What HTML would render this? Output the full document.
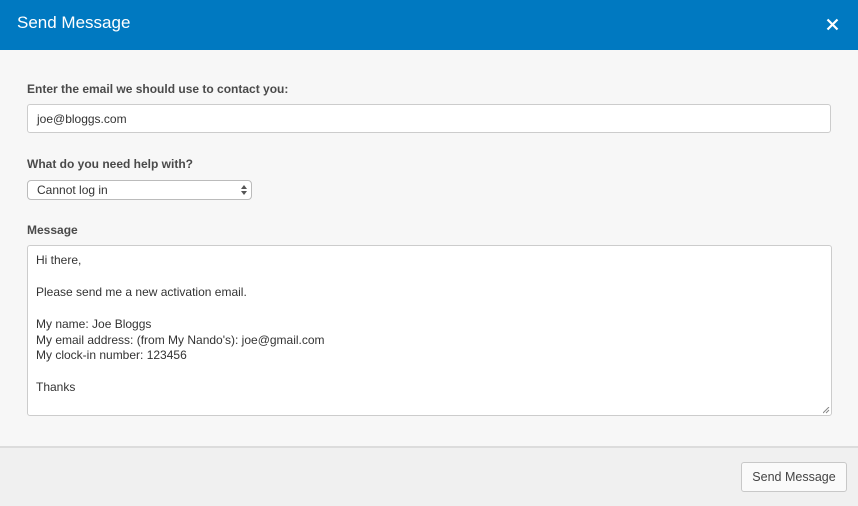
<!DOCTYPE html>
<html><head><style>
body{margin:0;width:858px;height:504px;background:#f7f7f7;font-family:"Liberation Sans",sans-serif;position:relative;overflow:hidden;color:#444}
.hdr{position:absolute;left:0;top:0;width:858px;height:50px;background:#0079c1;color:#fff}
.hdr .t{position:absolute;left:17px;top:13px;font-size:17px}
.hdr svg{position:absolute;left:826px;top:18px}
.lbl{position:absolute;left:27px;font-size:12px;font-weight:bold;color:#4a4a4a}
.box{position:absolute;left:27px;background:#fff;border:1px solid #ccc;border-radius:3px;box-sizing:border-box;font-size:12px;color:#333}
.foot{position:absolute;left:0;top:446px;width:858px;height:58px;background:#f0f0f0;border-top:2px solid #dcdcdc}
.btn{position:absolute;left:741px;top:462px;width:106px;height:30px;box-sizing:border-box;border:1px solid #c8c8c8;border-radius:3px;background:#fafafa;font-size:12.5px;color:#444;text-align:center;line-height:28px}
</style></head><body>
<div class="hdr"><div class="t">Send Message</div>
<svg width="13" height="13" viewBox="0 0 13 13"><path d="M1.5 1.5L11.5 11.5M11.5 1.5L1.5 11.5" stroke="#fff" stroke-width="2.2"/></svg></div>
<div class="lbl" style="top:82px">Enter the email we should use to contact you:</div>
<div class="box" style="top:104px;width:804px;height:29px;padding:7px 9px">joe@bloggs.com</div>
<div class="lbl" style="top:157px">What do you need help with?</div>
<div class="box" style="top:180px;width:225px;height:20px;padding:2px 9px;border-color:#bbb;border-radius:4px">Cannot log in
<svg style="position:absolute;right:4px;top:4px" width="6" height="10"><path d="M0 4L3 0L6 4ZM0 6L3 10L6 6Z" fill="#555"/></svg></div>
<div class="lbl" style="top:223px">Message</div>
<div class="box" style="top:245px;width:805px;height:171px;padding:7px 8px;line-height:15.9px">Hi there,<br><br>Please send me a new activation email.<br><br>My name: Joe Bloggs<br>My email address: (from My Nando's): joe@gmail.com<br>My clock-in number: 123456<br><br>Thanks
<svg style="position:absolute;right:1px;bottom:1px" width="7" height="7"><path d="M6 0L0 6M6 3L3 6" stroke="#888"/></svg></div>
<div class="foot"></div>
<div class="btn">Send Message</div>
</body></html>
